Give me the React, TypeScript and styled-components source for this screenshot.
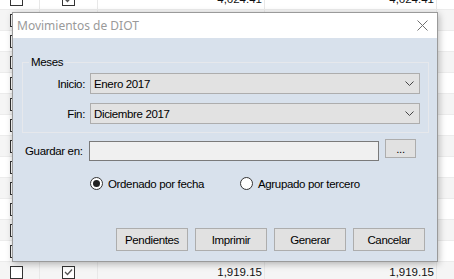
import React from "react";
import styled, {createGlobalStyle} from "styled-components";

const GlobalStyle = createGlobalStyle`
    html, body {
        margin: 0;
        padding: 0;
    }
    body {
        width: 454px;
        height: 279px;
        overflow: hidden;
        background: #fff;
        font-family: "Liberation Sans", Arial, sans-serif;
    }
`

const Screen = styled.div`
    position: relative;
    width: 454px;
    height: 279px;
    overflow: hidden;
`

// Background grid (the list behind the dialog)

const Grid = styled.div`
    display: flex;
    flex-direction: column;
    margin-top: -11px;
`

const GridRow = styled.div<{ $alt: boolean }>`
    display: grid;
    grid-template-columns: 40px 58px 167px 172px 1fr;
    height: 21px;
    box-sizing: border-box;
    border-bottom: 1px solid #ececec;
    background: ${p => p.$alt ? '#f5f5f5' : '#fff'};
`

const Cell = styled.div<{ $align?: 'start' | 'center' | 'end' }>`
    display: flex;
    align-items: center;
    justify-content: ${p => p.$align === 'end' ? 'flex-end' : p.$align === 'start' ? 'flex-start' : 'center'};
    border-right: 1px solid #e8e8e8;
    padding: 0 2px 0 0;
    font-size: 11.5px;
    color: #111;
    overflow: hidden;
    &:last-child {
        border-right: none;
    }
`

const GridCheck = styled.span<{ $shift?: number }>`
    display: flex;
    align-items: center;
    justify-content: center;
    width: 13px;
    height: 13px;
    box-sizing: border-box;
    border: 1px solid #333;
    background: #fff;
    margin-left: ${p => p.$shift ?? 0}px;
`

const CheckMark = () => (
    <svg width="9" height="8" viewBox="0 0 9 8">
        <path d="M1 4 L3.5 6.5 L8 1.5" fill="none" stroke="#555" strokeWidth="1.3"/>
    </svg>
)

// Dialog window

const Window = styled.div`
    position: absolute;
    left: 12px;
    top: 12px;
    width: 426px;
    height: 250px;
    box-sizing: border-box;
    border: 1px solid #9a9a9a;
    box-shadow: 1px 2px 7px rgba(0, 0, 0, 0.28);
    background: #d8e1ec;
    display: flex;
    flex-direction: column;
    font-size: 11.5px;
    letter-spacing: -0.35px;
    color: #000;
`

const TitleBar = styled.div`
    height: 25px;
    flex: none;
    background: #fff;
    display: flex;
    align-items: center;
    justify-content: space-between;
    padding: 0 9px 0 4px;
    font-family: "Noto Sans", "Open Sans", sans-serif;
    font-size: 12px;
    letter-spacing: 0;
    color: #9a9a9a;
`

const Body = styled.div`
    flex: 1;
    display: flex;
    flex-direction: column;
    padding: 18px 8px 10px 9px;
`

const GroupBox = styled.fieldset`
    margin: 0;
    padding: 4px 8px 8px 0;
    border: 1px solid #e6e8ec;
    display: grid;
    grid-template-columns: 62px 1fr;
    column-gap: 5px;
    row-gap: 9px;
    align-items: center;
`

const Legend = styled.legend`
    margin-left: 6px;
    padding: 0 2px;
    line-height: 13px;
`

const FieldLabel = styled.label`
    text-align: right;
`

const Combo = styled.div`
    height: 21px;
    box-sizing: border-box;
    border: 1px solid #adadad;
    background: #e2e2e2;
    display: flex;
    align-items: center;
    justify-content: space-between;
    padding: 0 5px 0 3px;
`

const Chevron = () => (
    <svg width="9" height="5" viewBox="0 0 9 5">
        <path d="M0.5 0.5 L4.5 4.5 L8.5 0.5" fill="none" stroke="#444" strokeWidth="1"/>
    </svg>
)

const PathRow = styled.div`
    display: flex;
    align-items: flex-start;
    margin-top: 6px;
    padding-left: 3px;
`

const PathLabel = styled.label`
    width: 64px;
    height: 20px;
    margin-top: 2px;
    display: flex;
    align-items: center;
`

const TextBox = styled.div`
    width: 290px;
    height: 20px;
    margin-top: 2px;
    box-sizing: border-box;
    border: 1px solid #7a7a7a;
    background: #f0f0f0;
`

const Button = styled.button<{ $w?: number, $h?: number }>`
    width: ${p => p.$w ?? 72}px;
    height: ${p => p.$h ?? 23}px;
    box-sizing: border-box;
    border: 1px solid #adadad;
    background: #e1e1e1;
    font: inherit;
    letter-spacing: inherit;
    color: #000;
    padding: 0;
`

const BrowseButton = styled(Button)`
    margin-left: 6px;
    line-height: 14px;
`

const RadioRow = styled.div`
    display: flex;
    align-items: center;
    margin-top: 16px;
    padding-left: 68px;
`

const RadioItem = styled.label<{ $w?: number }>`
    display: flex;
    align-items: center;
    width: ${p => p.$w ? `${p.$w}px` : 'auto'};
`

const RadioCircle = styled.span<{ $on: boolean }>`
    width: 13px;
    height: 13px;
    box-sizing: border-box;
    border-radius: 50%;
    border: 1px solid #333;
    background: #fff;
    display: flex;
    align-items: center;
    justify-content: center;
    margin-right: 5px;
    &::after {
        content: "";
        width: 7px;
        height: 7px;
        border-radius: 50%;
        background: #222;
        display: ${p => p.$on ? 'block' : 'none'};
    }
`

const ButtonRow = styled.div`
    margin-top: auto;
    margin-right: 4px;
    display: flex;
    justify-content: flex-end;
    gap: 7px;
`

// only the first and the last rows show outside the dialog
const rows = [
    {a: false, b: true, c: '4,624.41', d: '4,624.41'},
    ...Array.from({length: 12}, () => ({a: false, b: true, c: '', d: ''})),
    {a: false, b: true, c: '1,919.15', d: '1,919.15'},
]

const App = () => {
    return (
        <Screen>
            <GlobalStyle/>
            <Grid>
                {rows.map((r, i) => (
                    <GridRow key={i} $alt={i % 2 === 1}>
                        <Cell><GridCheck $shift={-4}>{r.a && <CheckMark/>}</GridCheck></Cell>
                        <Cell><GridCheck $shift={2}>{r.b && <CheckMark/>}</GridCheck></Cell>
                        <Cell $align="end">{r.c}</Cell>
                        <Cell $align="end">{r.d}</Cell>
                        <Cell/>
                    </GridRow>
                ))}
            </Grid>
            <Window>
                <TitleBar>
                    <span>Movimientos de DIOT</span>
                    <svg width="11" height="11" viewBox="0 0 11 11">
                        <path d="M0.5 0.5 L10.5 10.5 M10.5 0.5 L0.5 10.5" stroke="#707070" strokeWidth="1"/>
                    </svg>
                </TitleBar>
                <Body>
                    <GroupBox>
                        <Legend>Meses</Legend>
                        <FieldLabel>Inicio:</FieldLabel>
                        <Combo><span>Enero 2017</span><Chevron/></Combo>
                        <FieldLabel>Fin:</FieldLabel>
                        <Combo><span>Diciembre 2017</span><Chevron/></Combo>
                    </GroupBox>
                    <PathRow>
                        <PathLabel>Guardar en:</PathLabel>
                        <TextBox/>
                        <BrowseButton $w={31} $h={19}>...</BrowseButton>
                    </PathRow>
                    <RadioRow>
                        <RadioItem $w={150}><RadioCircle $on={true}/>Ordenado por fecha</RadioItem>
                        <RadioItem><RadioCircle $on={false}/>Agrupado por tercero</RadioItem>
                    </RadioRow>
                    <ButtonRow>
                        <Button>Pendientes</Button>
                        <Button>Imprimir</Button>
                        <Button>Generar</Button>
                        <Button>Cancelar</Button>
                    </ButtonRow>
                </Body>
            </Window>
        </Screen>
    )
}

export default App
